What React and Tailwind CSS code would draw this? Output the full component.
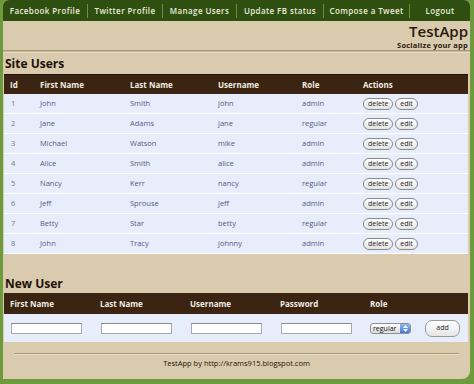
import React from "react";

const users = [
  [1, "John", "Smith", "john", "admin"],
  [2, "Jane", "Adams", "jane", "regular"],
  [3, "Michael", "Watson", "mike", "admin"],
  [4, "Alice", "Smith", "alice", "admin"],
  [5, "Nancy", "Kerr", "nancy", "regular"],
  [6, "Jeff", "Sprouse", "jeff", "admin"],
  [7, "Betty", "Star", "betty", "regular"],
  [8, "John", "Tracy", "johnny", "admin"],
];

const nav = [
  ["Facebook Profile", "w-[85px]"],
  ["Twitter Profile", "w-[75px]"],
  ["Manage Users", "w-[74px]"],
  ["Update FB status", "w-[87px]"],
  ["Compose a Tweet", "w-[86px]"],
  ["Logout", "w-[60px]"],
];

function Pill({ children }) {
  return (
    <span className="inline-flex items-center h-[12px] px-[4px] rounded-full border border-[#8a8a8a] bg-gradient-to-b from-white to-[#e4e4e4] text-[7px] leading-none text-[#222]">
      {children}
    </span>
  );
}

function Field() {
  return <div className="w-[71px] h-[11px] bg-white border border-[#a9a9a9] border-t-[#8c8c8c]" />;
}

export default function App() {
  return (
    <div
      className="w-[474px] h-[384px] bg-[#6c9a3d] pl-[3px] pr-[4px] pb-[5px]"
      style={{ fontFamily: '"Open Sans", "DejaVu Sans", sans-serif' }}
    >
      <div className="h-full flex flex-col bg-[#dacbae] rounded-tl-[6px] rounded-tr-[6px] rounded-br-[8px] overflow-hidden">
        {/* nav */}
        <div className="h-[21px] shrink-0 bg-[#2e4f10] flex items-center">
          {nav.map(([n, w], i) => (
            <div
              key={n}
              className={`${w} shrink-0 h-[14px] flex items-center justify-center whitespace-nowrap text-[8px] font-semibold tracking-[0.4px] text-[#ecebd9] ${i < nav.length - 1 ? "border-r border-[#6d8a4d]" : ""}`}
            >
              {n}
            </div>
          ))}
        </div>

        {/* header */}
        <div className="h-[29px] shrink-0 flex flex-col items-end pr-[2px] pt-[1px]">
          <div className="text-[15px] leading-[19px] font-semibold text-[#2a1a0d]">TestApp</div>
          <div className="text-[7.5px] leading-[8px] font-bold tracking-[0.2px] text-[#2a1a0d]">Socialize your app</div>
        </div>
        <div className="h-[3px] shrink-0 border-t border-[#a6977a] bg-[#c9b996] border-b border-b-[#e6dac2]" />

        {/* site users */}
        <div className="px-[1px] pt-[3px]">
          <div className="text-[12px] leading-[16px] font-bold text-[#1d1208] pl-[1px]">Site Users</div>
          <div className="mt-[2px] mr-[1px]">
            <div className="h-[20px] bg-[#3b2411] border-t border-[#1d1207] grid grid-cols-[31px_90px_88px_84px_61px_1fr] items-center text-[8px] font-bold text-[#f2ece0]">
              {["Id", "First Name", "Last Name", "Username", "Role", "Actions"].map((h, i) => (
                <div key={h} className={i === 0 ? "pl-[6px]" : "pl-[5px]"}>{h}</div>
              ))}
            </div>
            {users.map((u) => (
              <div
                key={u[0]}
                className="h-[20px] bg-[#e7edfb] border-b border-white grid grid-cols-[31px_90px_88px_84px_61px_1fr] items-center text-[7.5px] text-[#56598a]"
              >
                <div className="pl-[7px] text-[#76788e]">{u[0]}</div>
                <div className="pl-[5px]">{u[1]}</div>
                <div className="pl-[5px]">{u[2]}</div>
                <div className="pl-[5px]">{u[3]}</div>
                <div className="pl-[5px]">{u[4]}</div>
                <div className="pl-[5px] flex gap-[2px]">
                  <Pill>delete</Pill>
                  <Pill>edit</Pill>
                </div>
              </div>
            ))}
          </div>
        </div>

        {/* new user */}
        <div className="px-[1px] pt-[22px]">
          <div className="text-[12px] leading-[16px] font-bold text-[#1d1208] pl-[1px]">New User</div>
          <div className="mt-[1px] mr-[1px]">
            <div className="h-[21px] bg-[#3b2411] grid grid-cols-[90px_90px_90px_90px_56px_1fr] items-center text-[8px] font-bold text-[#f2ece0]">
              {["First Name", "Last Name", "Username", "Password", "Role", ""].map((h, i) => (
                <div key={i} className="pl-[6px]">{h}</div>
              ))}
            </div>
            <div className="h-[28px] bg-[#e7edfb] grid grid-cols-[90px_90px_90px_90px_56px_1fr] items-center">
              <div className="pl-[7px]"><Field /></div>
              <div className="pl-[7px]"><Field /></div>
              <div className="pl-[7px]"><Field /></div>
              <div className="pl-[7px]"><Field /></div>
              <div className="pl-[6px]">
                <div className="w-[41px] h-[11px] flex items-stretch rounded-[3px] border border-[#8e8e8e] bg-gradient-to-b from-white to-[#dcdcdc] overflow-hidden">
                  <div className="flex-1 text-[7px] leading-[9px] text-[#111] pl-[2px]">regular</div>
                  <div className="w-[10px] bg-gradient-to-b from-[#8fb7ec] to-[#3b7ad6] flex flex-col items-center justify-center gap-[1px]">
                    <svg width="5" height="3" viewBox="0 0 5 3"><path d="M0 3 L2.5 0 L5 3Z" fill="#fff" /></svg>
                    <svg width="5" height="3" viewBox="0 0 5 3"><path d="M0 0 L2.5 3 L5 0Z" fill="#fff" /></svg>
                  </div>
                </div>
              </div>
              <div className="pl-[5px]">
                <div className="w-[35px] h-[17px] rounded-[7px] border border-[#9a9a9a] bg-gradient-to-b from-white to-[#e6e6e6] flex items-center justify-center text-[7px] text-[#222]">
                  add
                </div>
              </div>
            </div>
          </div>
        </div>

        {/* footer */}
        <div className="mt-[11px] mx-[11px] h-[2px] border-t border-[#a89a7e] border-b border-b-[#e8ddc6]" />
        <div className="text-center text-[7.5px] leading-[10px] text-[#1d1208] mt-[3px]">
          TestApp by http://krams915.blogspot.com
        </div>
      </div>
    </div>
  );
}
